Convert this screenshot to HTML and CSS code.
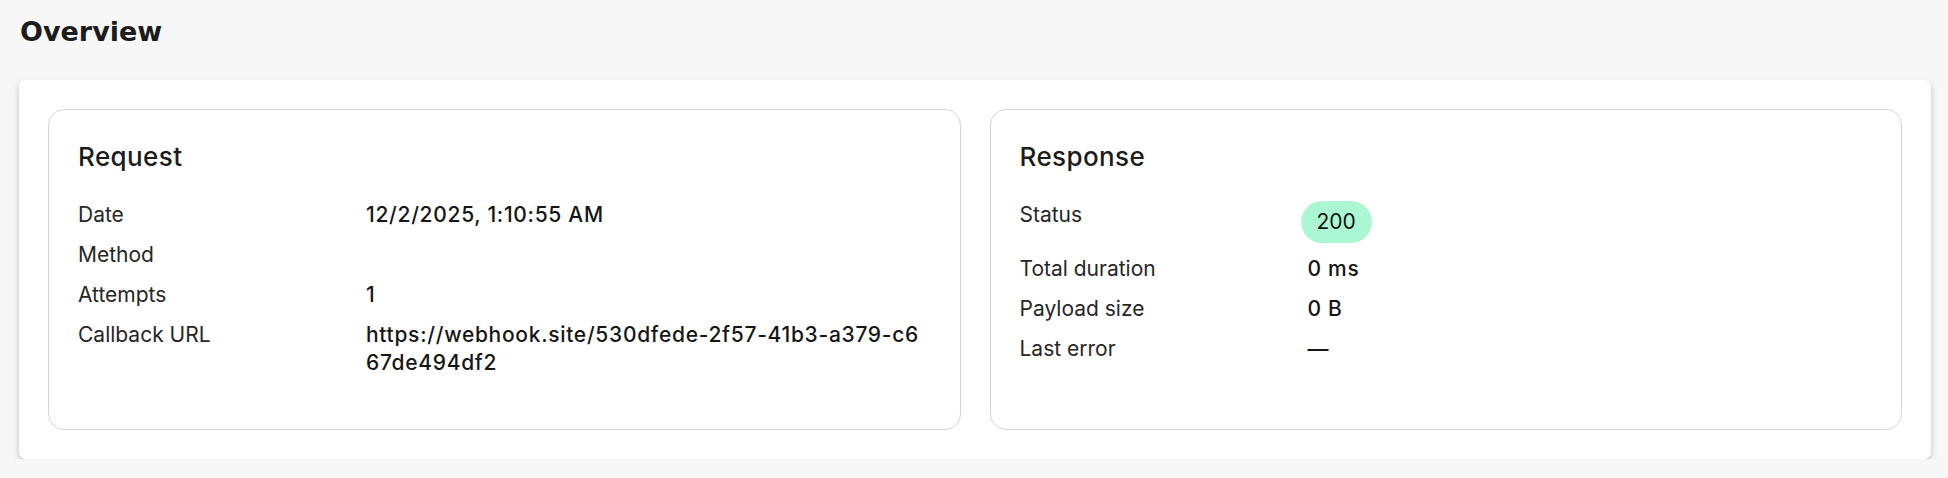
FILE: index.html
```html
<!DOCTYPE html>
<html lang="en">
<head>
<meta charset="utf-8">
<title>Overview</title>
<link rel="stylesheet" href="styles.css">
</head>
<body>
<main class="page">
  <h1 class="page-title">Overview</h1>
  <section class="card">
    <div class="panel">
      <h2 class="panel-title">Request</h2>
      <dl class="props">
        <dt>Date</dt><dd>12/2/2025, 1:10:55 AM</dd>
        <dt>Method</dt><dd></dd>
        <dt>Attempts</dt><dd>1</dd>
        <dt>Callback URL</dt><dd class="break">https://webhook.site/530dfede-2f57-41b3-a379-c667de494df2</dd>
      </dl>
    </div>
    <div class="panel">
      <h2 class="panel-title">Response</h2>
      <dl class="props">
        <dt>Status</dt><dd><span class="badge">200</span></dd>
        <dt>Total duration</dt><dd>0 ms</dd>
        <dt>Payload size</dt><dd>0 B</dd>
        <dt>Last error</dt><dd>—</dd>
      </dl>
    </div>
  </section>
</main>
</body>
</html>
```
FILE: styles.css
```css
html, body {
  margin: 0;
  padding: 0;
}
body {
  background: #f7f7f7;
  color: #1e1e1e;
  font-family: Inter, "Liberation Sans", sans-serif;
}
.page {
  padding: 16px 17px 0 19px;
}
.page-title {
  margin: 0 0 32px 1px;
  font-family: "DejaVu Sans", sans-serif;
  font-weight: 700;
  font-size: 27px;
  line-height: 32px;
  color: #1c1c1c;
}
.card {
  background: #fff;
  border-radius: 7px;
  box-shadow: 0 3px 6px rgba(0, 0, 0, 0.22);
  padding: 29px;
  display: grid;
  grid-template-columns: 1fr 1fr;
  gap: 29px;
}
.panel {
  border: 1px solid #d5d5d5;
  border-radius: 16px;
  padding: 29px 29px 52px 29px;
}
.panel-title {
  margin: 0 0 26px 0;
  font-size: 26px;
  line-height: 36px;
  font-weight: 500;
  letter-spacing: 0.4px;
  color: #1c1c1c;
}
.props {
  margin: 0;
  display: grid;
  grid-template-columns: 288px 1fr;
  row-gap: 12px;
  font-size: 21px;
  line-height: 28px;
}
.props dt {
  color: #262626;
  font-weight: 400;
}
.props dd {
  margin: 0;
  font-weight: 500;
  letter-spacing: 0.7px;
  color: #161616;
  min-height: 28px;
}
.break {
  word-break: break-all;
}
.badge {
  display: inline-block;
  vertical-align: top;
  margin-left: -7px;
  padding: 7px 16px;
  border-radius: 999px;
  background: #abf7d4;
  font-weight: 400;
  letter-spacing: 0;
  color: #141414;
}
```
